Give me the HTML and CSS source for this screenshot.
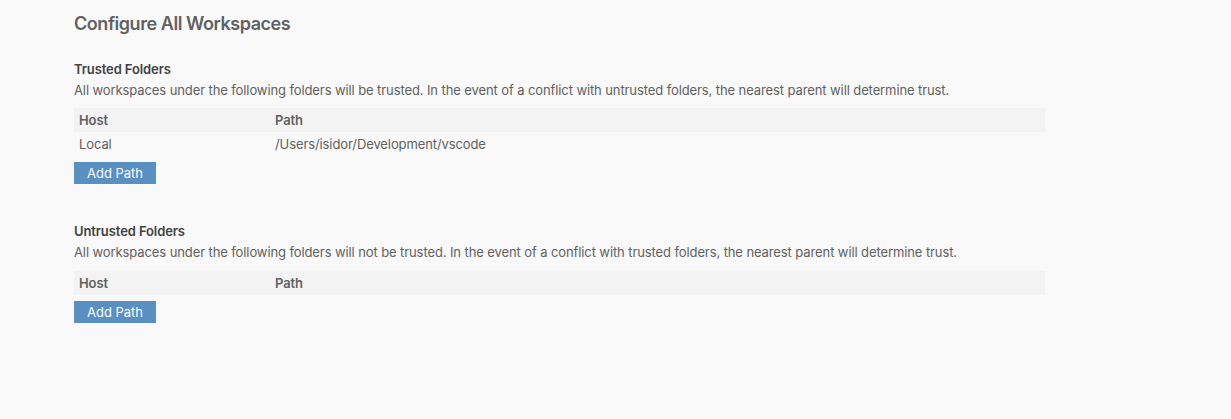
FILE: index.html
```html
<!DOCTYPE html>
<html>
<head>
<meta charset="utf-8">
<link rel="stylesheet" href="styles.css">
</head>
<body>
<div class="page">
  <h1 class="title">Configure All Workspaces</h1>
  <section class="section">
    <div class="section-title">Trusted Folders</div>
    <div class="section-desc">All workspaces under the following folders will be trusted. In the event of a conflict with untrusted folders, the nearest parent will determine trust.</div>
    <div class="table">
      <div class="row header"><div class="col-host">Host</div><div class="col-path">Path</div></div>
      <div class="row"><div class="col-host">Local</div><div class="col-path">/Users/isidor/Development/vscode</div></div>
    </div>
    <button class="btn">Add Path</button>
  </section>
  <section class="section second">
    <div class="section-title">Untrusted Folders</div>
    <div class="section-desc">All workspaces under the following folders will not be trusted. In the event of a conflict with trusted folders, the nearest parent will determine trust.</div>
    <div class="table">
      <div class="row header"><div class="col-host">Host</div><div class="col-path">Path</div></div>
    </div>
    <button class="btn">Add Path</button>
  </section>
</div>
</body>
</html>
```

FILE: styles.css
```css
html, body {
  margin: 0;
  padding: 0;
  background: #f9f9f9;
  height: 100%;
}
body {
  font-family: Inter, "Liberation Sans", sans-serif;
  font-size: 13px;
  color: #616161;
  letter-spacing: -0.1px;
}
.page {
  padding: 12px 0 0 74px;
  width: 971px;
}
.title {
  margin: 0;
  font-size: 18px;
  font-weight: 600;
  line-height: 24px;
  letter-spacing: -0.45px;
  color: #616161;
}
.section {
  margin-top: 23px;
}
.section.second {
  margin-top: 37px;
}
.section-title {
  font-weight: 600;
  line-height: 20px;
  color: #424242;
}
.section-desc {
  line-height: 20px;
  margin-top: 1px;
}
.table {
  margin-top: 8px;
}
.second .table {
  margin-top: 9px;
}
.row {
  display: flex;
  height: 24px;
  align-items: center;
}
.row.header {
  background: #f3f3f3;
  font-weight: 600;
}
.col-host {
  width: 196px;
  padding-left: 5px;
}
.col-path {
  flex: 1;
}
.btn {
  margin-top: 6px;
  width: 82px;
  height: 22px;
  border: none;
  background: #5a8fc1;
  color: #fff;
  font-family: inherit;
  font-size: 13px;
  letter-spacing: 0;
  padding: 0;
  display: block;
}
```
